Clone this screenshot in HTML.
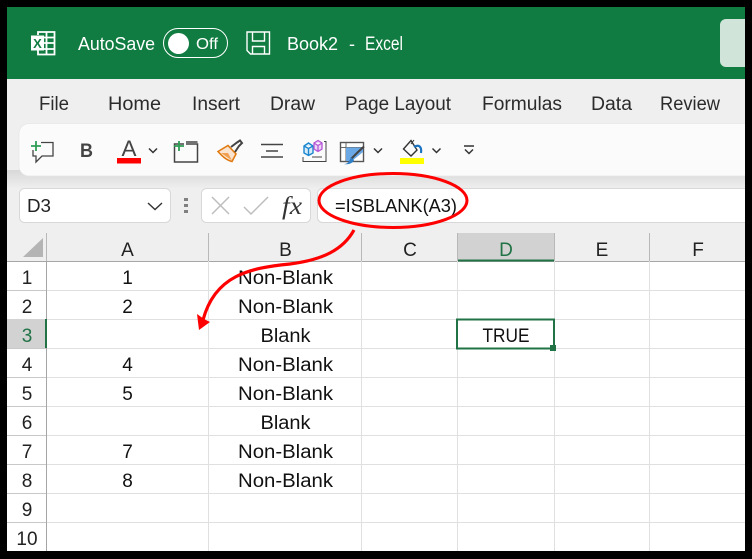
<!DOCTYPE html>
<html><head><meta charset="utf-8"><style>
html,body{margin:0;padding:0;background:#000;width:752px;height:559px;overflow:hidden}
svg{display:block}
text{font-family:"Liberation Sans",sans-serif}
.t{font-size:19px;fill:#2b2b2b}
.c{font-size:19px;fill:#111}
.h{font-size:19px;fill:#222}
.w{font-size:18px;fill:#fff}
</style></head><body>
<svg width="752" height="559" viewBox="0 0 752 559" xmlns="http://www.w3.org/2000/svg">
<defs>
<linearGradient id="g" x1="0" y1="0" x2="0" y2="1"><stop offset="0" stop-color="#d8d8d8"/><stop offset="1" stop-color="#eeeeee"/></linearGradient>
<clipPath id="p"><rect x="7" y="7" width="738" height="544"/></clipPath></defs>
<rect width="752" height="559" fill="#000"/>
<g clip-path="url(#p)">
<rect x="7" y="7" width="738" height="544" fill="#fff"/>
<rect x="7" y="7" width="738" height="72" fill="#107c41"/>
<rect x="7" y="79" width="738" height="182" fill="#efefef"/>
<rect x="720" y="19" width="40" height="48" rx="6" fill="#d0e4d9"/>
<!-- Excel logo -->
<g fill="none" stroke="#fff" stroke-width="1.800"><path d="M38 35V32H54.500V54.500H38V50M38 37.500H54.500M43 43H54.500M43 49H54.500M46.500 32V54.500"/></g>
<rect x="31" y="35.500" width="13" height="15" fill="#fff"/>
<text x="37.500" y="48" text-anchor="middle" style="font-size:13px;font-weight:bold;fill:#107c41">X</text>
<text class="w" x="78" y="50" textLength="77" lengthAdjust="spacingAndGlyphs">AutoSave</text>
<rect x="163.500" y="28.500" width="64" height="29" rx="14.500" fill="none" stroke="#fff"/>
<circle cx="178.500" cy="43.500" r="10.500" fill="#fff"/>
<text x="196" y="49" textLength="22" lengthAdjust="spacingAndGlyphs" style="font-size:16px;fill:#fff">Off</text>
<path d="M247 32H269.500V54H250.500L247 50.500ZM252.500 32V41H264.500V32M252.500 54V46.500H264.500V54" fill="none" stroke="#fff" stroke-width="1.400"/>
<text class="w" x="287" y="50" textLength="51" lengthAdjust="spacingAndGlyphs">Book2</text>
<text class="w" x="349" y="50">-</text>
<text x="365" y="50" textLength="38" lengthAdjust="spacingAndGlyphs" style="font-size:19px;fill:#fff">Excel</text>
<!-- tabs -->
<text class="t" x="39" y="110" textLength="30" lengthAdjust="spacingAndGlyphs">File</text>
<text class="t" x="108" y="110" textLength="53" lengthAdjust="spacingAndGlyphs">Home</text>
<text class="t" x="192" y="110" textLength="48" lengthAdjust="spacingAndGlyphs">Insert</text>
<text class="t" x="270" y="110" textLength="45" lengthAdjust="spacingAndGlyphs">Draw</text>
<text class="t" x="345" y="110" textLength="106" lengthAdjust="spacingAndGlyphs">Page Layout</text>
<text class="t" x="482" y="110" textLength="80" lengthAdjust="spacingAndGlyphs">Formulas</text>
<text class="t" x="591" y="110" textLength="41" lengthAdjust="spacingAndGlyphs">Data</text>
<text class="t" x="660" y="110" textLength="60" lengthAdjust="spacingAndGlyphs">Review</text>
<!-- toolbar -->
<rect x="7" y="170" width="738" height="18" fill="url(#g)"/>
<rect x="19" y="123.500" width="760" height="52.500" rx="10" fill="#fbfbfb" stroke="#e6e6e6" stroke-width=".7"/>
<path d="M41 142.500H53V156H42L36 162V156H33V150" fill="none" stroke="#444" stroke-width="1.300"/>
<path d="M31 146H41M36 141V151" stroke="#2f9e55" stroke-width="1.800" fill="none"/>
<text x="80" y="157" textLength="13" lengthAdjust="spacingAndGlyphs" style="font-size:19px;font-weight:bold;fill:#444">B</text>
<text x="121.500" y="156" textLength="15" lengthAdjust="spacingAndGlyphs" style="font-size:22px;fill:#444">A</text>
<rect x="117" y="158" width="24" height="5.500" fill="#f00"/>
<path d="M149 148.500L153 152.500L157 148.500M374 148.500L378 152.500L382 148.500M432.500 148.500L436.500 152.500L440.500 148.500" fill="none" stroke="#333" stroke-width="1.500"/>
<!-- add cell -->
<path d="M184 144H174.500V162H197.500V144H186M186 142H197.500" fill="none" stroke="#444" stroke-width="1.500"/>
<path d="M174 146H184M179 141V151" stroke="#2f9e55" stroke-width="1.800" fill="none"/>
<!-- brush -->
<path d="M218 151.500L228 145.500L236 154L232 161.500C226 160 222 156 218 151.500Z" fill="#fbe4cf" stroke="#e07a10" stroke-width="1.600"/>
<path d="M221 153L232 160.500L228 153Z" fill="#f0a050"/>
<path d="M231 147L237 142.500L240 140.500L242 143L239 146L235 152" fill="none" stroke="#444" stroke-width="2"/>
<!-- align -->
<path d="M261 144.500H283M266 151H278M261 157H283" stroke="#444" stroke-width="1.500" fill="none"/>
<!-- 3d -->
<path d="M304 146L308.500 143L313 146V153L308.500 155.500L304 153ZM304 146L308.500 148.500L313 146M308.500 148.500V155.500" fill="#d8ecf8" stroke="#1a86d0" stroke-width="1.400"/>
<path d="M314 143L318 140.500L322 143V149L318 151.500L314 149ZM314 143L318 145.500L322 143M318 145.500V151.500" fill="#edd5f5" stroke="#b455d6" stroke-width="1.300"/>
<path d="M324 141.500H326V161.500H303V157M312 157H322" fill="none" stroke="#444" stroke-width="1"/>
<!-- table style -->
<rect x="340.500" y="142.500" width="23" height="19" fill="#fff" stroke="#555" stroke-width="1.400"/>
<path d="M341 147.500H363M346 143V161" stroke="#666"/>
<path d="M346 147.500H363V152L352 161H346Z" fill="#6aa8e6"/>
<path d="M351 159L358 152L364 146.500" stroke="#444" stroke-width="2" fill="none"/>
<path d="M344 164C348 164 349 161 351 157.500L354 160C353 163 349 165 344 164Z" fill="#2f7fc8"/>
<!-- fill -->
<path d="M403.500 149L411 140.500L417 150L411 156Z" fill="none" stroke="#333" stroke-width="1.400"/>
<path d="M411 144L414 140" stroke="#333" stroke-width="1"/>
<path d="M414 147C419 144 422 147 421 153" fill="none" stroke="#1a73c0" stroke-width="2.200"/>
<rect x="400" y="158" width="24" height="6" fill="#ff0"/>
<path d="M464 146H474M465 149.500L469 153.500L473 149.500" fill="none" stroke="#333" stroke-width="1.500"/>
<!-- name box -->
<rect x="19.500" y="188.500" width="151" height="34" rx="5" fill="#fff" stroke="#d8d8d8"/>
<text x="27" y="212" textLength="24" lengthAdjust="spacingAndGlyphs" style="font-size:18px;fill:#222">D3</text>
<path d="M148 203L155 209.500L162 203" fill="none" stroke="#333" stroke-width="1.400"/>
<path d="M186 198v3M186 204v3M186 210v3" stroke="#808080" stroke-width="4"/>
<rect x="201.500" y="188.500" width="109" height="34" rx="5" fill="#fff" stroke="#d8d8d8"/>
<path d="M212 197L229 214M229 197L212 214" stroke="#bdbdbd" stroke-width="1.500" fill="none"/>
<path d="M244 207L251 214L268 197" stroke="#bdbdbd" stroke-width="1.500" fill="none"/>
<text x="282" y="214" textLength="20" lengthAdjust="spacingAndGlyphs" style="font-family:'Liberation Serif',serif;font-size:25px;font-style:italic;fill:#333">fx</text>
<rect x="317.500" y="188.500" width="460" height="34" rx="5" fill="#fff" stroke="#d8d8d8"/>
<text x="335" y="212" textLength="122" lengthAdjust="spacingAndGlyphs" style="font-size:18px;fill:#111">=ISBLANK(A3)</text>
<!-- headers -->
<rect x="458" y="233" width="96" height="28" fill="#d2d2d2"/>
<rect x="7" y="319" width="39" height="29" fill="#d2d2d2"/>
<path d="M23 257L43 238V257Z" fill="#b4b4b4"/>
<path d="M46.500 233V261M208.500 233V261M361.500 233V261M457.500 233V261M554.500 233V261M649.500 233V261" stroke="#b8b8b8"/>
<path d="M7 261.500H745" stroke="#a6a6a6"/>
<path d="M458 260.500H554" stroke="#217346" stroke-width="2"/>
<path d="M46.500 261V551" stroke="#a6a6a6"/>
<path d="M7 290.500H46M7 348.500H46M7 377.500H46M7 406.500H46M7 435.500H46M7 464.500H46M7 493.500H46M7 522.500H46" stroke="#c8c8c8"/>
<path d="M47 290.500H745M47 319.500H745M47 348.500H745M47 377.500H745M47 406.500H745M47 435.500H745M47 464.500H745M47 493.500H745M47 522.500H745M208.500 261V551M361.500 261V551M457.500 261V551M554.500 261V551M649.500 261V551" stroke="#e0e0e0"/>
<path d="M46 319V348" stroke="#217346" stroke-width="2"/>
<g text-anchor="middle">
<text class="h" x="127.500" y="256">A</text><text class="h" x="285.500" y="256">B</text><text class="h" x="410" y="256">C</text><text x="506" y="256" style="font-size:19px;fill:#217346">D</text><text class="h" x="602" y="256">E</text><text class="h" x="698" y="256">F</text>
<text class="h" x="27" y="284">1</text><text class="h" x="27" y="313">2</text><text x="27" y="342" style="font-size:19px;fill:#217346">3</text><text class="h" x="27" y="371">4</text><text class="h" x="27" y="400">5</text><text class="h" x="27" y="429">6</text><text class="h" x="27" y="458">7</text><text class="h" x="27" y="487">8</text><text class="h" x="27" y="516">9</text><text class="h" x="27" y="545">10</text>
<text class="c" x="127.500" y="284">1</text><text class="c" x="127.500" y="313">2</text><text class="c" x="127.500" y="371">4</text><text class="c" x="127.500" y="400">5</text><text class="c" x="127.500" y="458">7</text><text class="c" x="127.500" y="487">8</text>
<text class="c" x="285.500" y="284" textLength="95" lengthAdjust="spacingAndGlyphs">Non-Blank</text>
<text class="c" x="285.500" y="313" textLength="95" lengthAdjust="spacingAndGlyphs">Non-Blank</text>
<text class="c" x="285.500" y="342" textLength="50" lengthAdjust="spacingAndGlyphs">Blank</text>
<text class="c" x="285.500" y="371" textLength="95" lengthAdjust="spacingAndGlyphs">Non-Blank</text>
<text class="c" x="285.500" y="400" textLength="95" lengthAdjust="spacingAndGlyphs">Non-Blank</text>
<text class="c" x="285.500" y="429" textLength="50" lengthAdjust="spacingAndGlyphs">Blank</text>
<text class="c" x="285.500" y="458" textLength="95" lengthAdjust="spacingAndGlyphs">Non-Blank</text>
<text class="c" x="285.500" y="487" textLength="95" lengthAdjust="spacingAndGlyphs">Non-Blank</text>
<text class="c" x="506" y="342" textLength="47" lengthAdjust="spacingAndGlyphs">TRUE</text>
</g>
<rect x="457" y="319.500" width="97" height="29" fill="none" stroke="#217346" stroke-width="2"/>
<rect x="550" y="345" width="6" height="6" fill="#217346"/>
<!-- annotation -->
<ellipse cx="393" cy="200.500" rx="74" ry="27" fill="none" stroke="#f00" stroke-width="3"/>
<path d="M354 230C343 250 322 260 290 264C250 268 215 275 203 320" fill="none" stroke="#f00" stroke-width="3.200"/>
<path d="M199 330L197 314L204 319L210 322Z" fill="#f00"/>
</g>
</svg>
</body></html>
